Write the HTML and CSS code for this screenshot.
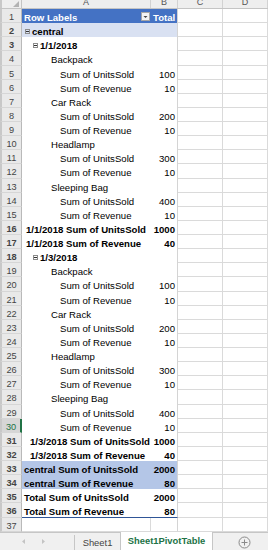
FILE: index.html
```html
<!DOCTYPE html>
<html lang="en">
<head>
  <meta charset="UTF-8">
  <title>Sheet1PivotTable</title>
  <link rel="stylesheet" href="styles.css">
</head>
<body>
  <div class="sheet">
    <div class="cols">
      <div class="corner"><svg width="21" height="8"><polygon points="11,7 17,1 17,7" fill="#b3b3b3"/></svg></div>
      <div class="ch"><span>A</span></div>
      <div class="ch"><span>B</span></div>
      <div class="ch"><span>C</span></div>
      <div class="ch"><span>D</span></div>
    </div>

    <div class="grid">
      <div class="row hdr"><div class="rh">1</div><div class="ca l-hd">Row Labels<span class="drop"><svg width="9" height="9"><rect x="0.5" y="0.5" width="8" height="8" fill="#f4f4f4" stroke="#a6a6a6"/><polygon points="2.5,4 6.5,4 4.5,6" fill="#444"/></svg></span></div><div class="cb left">Total</div><div class="cc"></div><div class="cd"></div></div>
      <div class="row lvl0"><div class="rh">2</div><div class="ca l0"><span class="tog"></span>central</div><div class="cb"></div><div class="cc"></div><div class="cd"></div></div>
      <div class="row b"><div class="rh">3</div><div class="ca l1"><span class="tog"></span>1/1/2018</div><div class="cb"></div><div class="cc"></div><div class="cd"></div></div>
      <div class="row"><div class="rh">4</div><div class="ca l2">Backpack</div><div class="cb"></div><div class="cc"></div><div class="cd"></div></div>
      <div class="row"><div class="rh">5</div><div class="ca l3">Sum of UnitsSold</div><div class="cb">100</div><div class="cc"></div><div class="cd"></div></div>
      <div class="row"><div class="rh">6</div><div class="ca l3">Sum of Revenue</div><div class="cb">10</div><div class="cc"></div><div class="cd"></div></div>
      <div class="row"><div class="rh">7</div><div class="ca l2">Car Rack</div><div class="cb"></div><div class="cc"></div><div class="cd"></div></div>
      <div class="row"><div class="rh">8</div><div class="ca l3">Sum of UnitsSold</div><div class="cb">200</div><div class="cc"></div><div class="cd"></div></div>
      <div class="row"><div class="rh">9</div><div class="ca l3">Sum of Revenue</div><div class="cb">10</div><div class="cc"></div><div class="cd"></div></div>
      <div class="row"><div class="rh">10</div><div class="ca l2">Headlamp</div><div class="cb"></div><div class="cc"></div><div class="cd"></div></div>
      <div class="row"><div class="rh">11</div><div class="ca l3">Sum of UnitsSold</div><div class="cb">300</div><div class="cc"></div><div class="cd"></div></div>
      <div class="row"><div class="rh">12</div><div class="ca l3">Sum of Revenue</div><div class="cb">10</div><div class="cc"></div><div class="cd"></div></div>
      <div class="row"><div class="rh">13</div><div class="ca l2">Sleeping Bag</div><div class="cb"></div><div class="cc"></div><div class="cd"></div></div>
      <div class="row"><div class="rh">14</div><div class="ca l3">Sum of UnitsSold</div><div class="cb">400</div><div class="cc"></div><div class="cd"></div></div>
      <div class="row"><div class="rh">15</div><div class="ca l3">Sum of Revenue</div><div class="cb">10</div><div class="cc"></div><div class="cd"></div></div>
      <div class="row b"><div class="rh">16</div><div class="ca l-s1">1/1/2018 Sum of UnitsSold</div><div class="cb">1000</div><div class="cc"></div><div class="cd"></div></div>
      <div class="row b"><div class="rh">17</div><div class="ca l-s1">1/1/2018 Sum of Revenue</div><div class="cb">40</div><div class="cc"></div><div class="cd"></div></div>
      <div class="row b"><div class="rh">18</div><div class="ca l1"><span class="tog"></span>1/3/2018</div><div class="cb"></div><div class="cc"></div><div class="cd"></div></div>
      <div class="row"><div class="rh">19</div><div class="ca l2">Backpack</div><div class="cb"></div><div class="cc"></div><div class="cd"></div></div>
      <div class="row"><div class="rh">20</div><div class="ca l3">Sum of UnitsSold</div><div class="cb">100</div><div class="cc"></div><div class="cd"></div></div>
      <div class="row"><div class="rh">21</div><div class="ca l3">Sum of Revenue</div><div class="cb">10</div><div class="cc"></div><div class="cd"></div></div>
      <div class="row"><div class="rh">22</div><div class="ca l2">Car Rack</div><div class="cb"></div><div class="cc"></div><div class="cd"></div></div>
      <div class="row"><div class="rh">23</div><div class="ca l3">Sum of UnitsSold</div><div class="cb">200</div><div class="cc"></div><div class="cd"></div></div>
      <div class="row"><div class="rh">24</div><div class="ca l3">Sum of Revenue</div><div class="cb">10</div><div class="cc"></div><div class="cd"></div></div>
      <div class="row"><div class="rh">25</div><div class="ca l2">Headlamp</div><div class="cb"></div><div class="cc"></div><div class="cd"></div></div>
      <div class="row"><div class="rh">26</div><div class="ca l3">Sum of UnitsSold</div><div class="cb">300</div><div class="cc"></div><div class="cd"></div></div>
      <div class="row"><div class="rh">27</div><div class="ca l3">Sum of Revenue</div><div class="cb">10</div><div class="cc"></div><div class="cd"></div></div>
      <div class="row"><div class="rh">28</div><div class="ca l2">Sleeping Bag</div><div class="cb"></div><div class="cc"></div><div class="cd"></div></div>
      <div class="row"><div class="rh">29</div><div class="ca l3">Sum of UnitsSold</div><div class="cb">400</div><div class="cc"></div><div class="cd"></div></div>
      <div class="row"><div class="rh sel">30</div><div class="ca l3">Sum of Revenue</div><div class="cb">10</div><div class="cc"></div><div class="cd"></div></div>
      <div class="row b"><div class="rh">31</div><div class="ca l-s2">1/3/2018 Sum of UnitsSold</div><div class="cb">1000</div><div class="cc"></div><div class="cd"></div></div>
      <div class="row b"><div class="rh">32</div><div class="ca l-s2">1/3/2018 Sum of Revenue</div><div class="cb">40</div><div class="cc"></div><div class="cd"></div></div>
      <div class="row b sub"><div class="rh">33</div><div class="ca l-t">central Sum of UnitsSold</div><div class="cb">2000</div><div class="cc"></div><div class="cd"></div></div>
      <div class="row b sub"><div class="rh">34</div><div class="ca l-t">central Sum of Revenue</div><div class="cb">80</div><div class="cc"></div><div class="cd"></div></div>
      <div class="row b"><div class="rh">35</div><div class="ca l-t">Total Sum of UnitsSold</div><div class="cb">2000</div><div class="cc"></div><div class="cd"></div></div>
      <div class="row b grand"><div class="rh">36</div><div class="ca l-t">Total Sum of Revenue</div><div class="cb">80</div><div class="cc"></div><div class="cd"></div></div>
      <div class="row blank"><div class="rh">37</div><div class="ca"></div><div class="cb"></div><div class="cc"></div><div class="cd"></div></div>
    </div>

    <div class="tabs">
      <div class="nav">
        <svg width="74" height="17"><polygon points="25,6 25,11 22,8.5" fill="#c4c4c4"/><polygon points="42,6 42,11 45,8.5" fill="#c4c4c4"/></svg>
      </div>
      <div class="tab">Sheet1</div>
      <div class="tab on">Sheet1PivotTable</div>
      <div class="add">
        <svg width="13" height="13"><circle cx="6.5" cy="6.5" r="5.5" fill="none" stroke="#8a8a8a"/><path d="M6.5 3.5v6M3.5 6.5h6" stroke="#8a8a8a"/></svg>
      </div>
    </div>
  </div>
</body>
</html>
```

FILE: styles.css
```css
/* Excel style pivot table sheet */
* {
  box-sizing: border-box;
}
body {
  margin: 0;
  font-family: "Liberation Sans", Arial, sans-serif;
  font-size: 9.6px;
  color: #000000;
  background-color: #ffffff;
}
.sheet {
  width: 268px;
  height: 550px;
  overflow: hidden;
  display: flex;
  flex-direction: column;
}

/* column letters */
.cols {
  display: grid;
  grid-template-columns: 22px 129px 27px 45px 1fr;
  height: 9px;
  flex-shrink: 0;
  background-color: #eeeeee;
  border-bottom: 1px solid #c4c4c4;
  overflow: hidden;
}
.corner {
  border-right: 1px solid #c4c4c4;
  border-left: 2px solid #c8c8c8;
}
.corner svg {
  display: block;
}
.ch {
  border-right: 1px solid #d2d2d2;
  text-align: center;
  color: #555555;
  font-size: 9px;
}
.ch span {
  display: block;
  line-height: 12px;
  margin-top: -4px;
}

/* rows */
.row {
  display: grid;
  grid-template-columns: 22px 129px 27px 45px 1fr;
  height: 14.14px;
}
.row > div {
  display: flex;
  align-items: center;
  padding-top: 3px;
  white-space: nowrap;
  overflow: hidden;
}
.rh {
  justify-content: center;
  background-color: #e9e9e9;
  color: #444444;
  font-size: 9.2px;
  border-left: 2px solid #c8c8c8;
  border-right: 1px solid #b9b9b9;
  border-bottom: 1px solid #d6d6d6;
}
.rh.sel {
  background-color: #d6d6d6;
  color: #217346;
  border-right: 2px solid #217346;
}
.cb {
  justify-content: flex-end;
  padding-right: 2px;
  border-right: 1px solid #d4d4d4;
}
.cb.left {
  justify-content: flex-start;
  padding-left: 2px;
}
.cc,
.cd {
  border-right: 1px solid #dadada;
  border-bottom: 1px solid #dadada;
}

/* indents of the row labels */
.l-hd { padding-left: 2px; justify-content: space-between; }
.l0 { padding-left: 3px; }
.l1 { padding-left: 11px; }
.l2 { padding-left: 29px; }
.l3 { padding-left: 38px; }
.l-s1 { padding-left: 4px; }
.l-s2 { padding-left: 8px; }
.l-t { padding-left: 2px; }

.drop {
  margin-right: 1px;
  margin-top: -3px;
  height: 9px;
}
.drop svg {
  display: block;
}
.tog {
  width: 5px;
  height: 5px;
  border: 1px solid #8c8c8c;
  margin-right: 2px;
  display: flex;
  align-items: center;
  justify-content: center;
}
.tog::after {
  content: "";
  width: 3px;
  height: 1px;
  background-color: #333333;
}

/* pivot styles */
.b {
  font-weight: bold;
}
.hdr .ca,
.hdr .cb {
  background-color: #4472c4;
  color: #ffffff;
  font-weight: bold;
}
.lvl0 {
  font-weight: bold;
}
.lvl0 .ca,
.lvl0 .cb {
  background-color: #d9e1f2;
}
.sub .ca,
.sub .cb {
  background-color: #b4c6e7;
}
.grand .ca,
.grand .cb {
  border-bottom: 1px solid #2f5597;
}
.blank .ca {
  border-right: 1px solid #dadada;
  border-bottom: 1px solid #dadada;
}
.blank .cb {
  border-bottom: 1px solid #dadada;
}

/* sheet tabs */
.tabs {
  flex: 1;
  display: flex;
  background-color: #f0f0f0;
  border-top: 1px solid #c6c6c6;
  font-size: 9.4px;
  color: #444444;
}
.nav {
  width: 75px;
  border-right: 1px solid #c6c6c6;
  margin: 2px 0;
}
.nav svg {
  display: block;
  margin-top: -2px;
}
.tab {
  width: 46px;
  display: flex;
  align-items: center;
  justify-content: center;
  border-right: 1px solid #c6c6c6;
}
.tab.on {
  width: 92px;
  margin-top: -1px;
  background-color: #ffffff;
  color: #217346;
  font-weight: bold;
  border-bottom: 2px solid #217346;
}
.add {
  margin-left: 25px;
  display: flex;
  align-items: center;
}
.add svg {
  display: block;
}
```
